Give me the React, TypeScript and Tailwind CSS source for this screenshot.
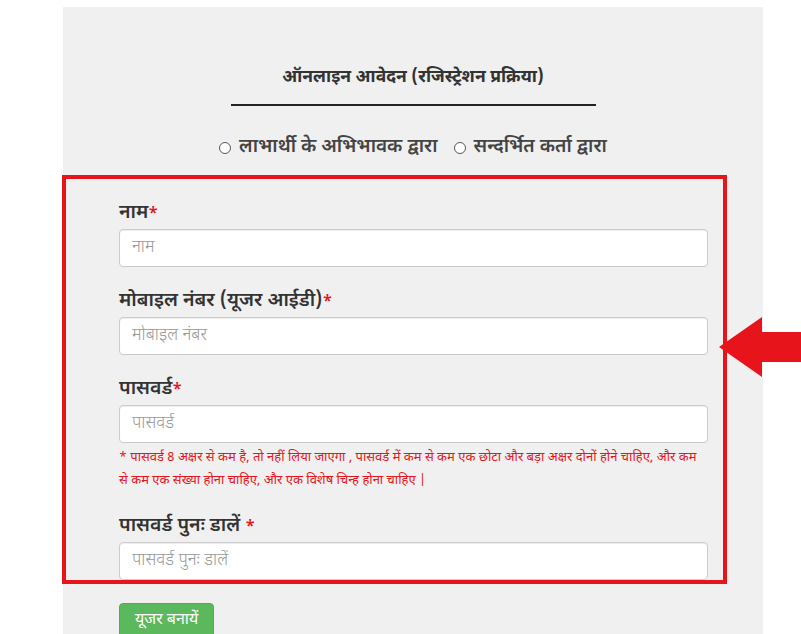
import React from "react";

const font = { fontFamily: '"Noto Sans Devanagari", "Noto Sans", "Lohit Devanagari", sans-serif' };

function Field({ label, placeholder, space = "" }: { label: string; placeholder: string; space?: string }) {
    return (
        <div>
            <label className="block h-6 mb-[6px] text-[19.5px] leading-[30px] font-semibold text-[#333]">
                {label}
                {space}
                <span className="text-[#e8141c] text-[16px]">*</span>
            </label>
            <input
                placeholder={placeholder}
                className="block w-full h-[38px] px-3 bg-white border border-[#ccc] rounded text-[17px] font-light text-[#555] placeholder:text-[#999] shadow-[inset_0_1px_1px_rgba(0,0,0,0.075)]"
            />
        </div>
    );
}

export default function App() {
    return (
        <div className="h-screen bg-white overflow-hidden" style={font}>
            <div className="relative ml-[63px] mt-[7px] w-[700px] bg-[#f0f0f0] pb-10">
                <div className="pt-[59px] flex flex-col items-center">
                    <h3 className="text-[17.5px] font-bold text-[#333] leading-6">
                        ऑनलाइन आवेदन (रजिस्ट्रेशन प्रक्रिया)
                    </h3>
                    <div className="mt-[14px] w-[365px] border-t-2 border-[#222]" />
                    <div className="mt-[30px] flex items-center gap-4 text-[19px] font-semibold text-[#444] leading-6">
                        <label className="flex items-center gap-2">
                            <span className="w-3 h-3 rounded-full border border-[#555] bg-white" />
                            लाभार्थी के अभिभावक द्वारा
                        </label>
                        <label className="flex items-center gap-2">
                            <span className="w-3 h-3 rounded-full border border-[#555] bg-white" />
                            सन्दर्भित कर्ता द्वारा
                        </label>
                    </div>
                </div>

                <div className="mt-[15px] -ml-px mr-[36px] border-4 border-[#e8141c] pt-5 pl-[53px] pr-[15px]">
                    <div className="flex flex-col gap-5">
                        <Field label="नाम" placeholder="नाम" />
                        <Field label="मोबाइल नंबर (यूजर आईडी)" placeholder="मोबाइल नंबर" />
                        <div>
                            <Field label="पासवर्ड" placeholder="पासवर्ड" />
                            <p className="mt-[3px] text-[13px] leading-[23px] text-[#e8141c]">
                                * पासवर्ड 8 अक्षर से कम है, तो नहीं लिया जाएगा , पासवर्ड में कम से कम एक छोटा और बड़ा अक्षर दोनों होने चाहिए, और कम
                                <br />
                                से कम एक संख्या होना चाहिए, और एक विशेष चिन्ह होना चाहिए |
                            </p>
                        </div>
                        <Field label="पासवर्ड पुनः डालें" placeholder="पासवर्ड पुनः डालें" space=" " />
                    </div>
                </div>

                <div className="mt-[19px] pl-[56px]">
                    <button className="h-[36px] px-[15px] bg-[#5cb85c] border border-[#4cae4c] rounded text-white text-[16px]">
                        यूजर बनायें
                    </button>
                </div>

                <svg className="absolute left-[656px] top-[310px]" width="82" height="62" viewBox="0 0 82 62">
                    <polygon points="0,30 43,0 43,15 82,15 82,45 43,45 43,60" fill="#e8141c" />
                </svg>
            </div>
        </div>
    );
}
